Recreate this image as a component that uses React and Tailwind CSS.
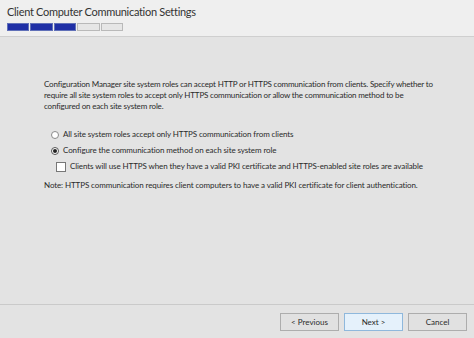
export default function App() {
  const font = { fontFamily: 'Lato, "Open Sans", sans-serif' }
  return (
    <div className="w-[474px] h-[338px] bg-[#e3e3e3] flex flex-col text-[#2a2a2a]" style={font}>
      {/* Header */}
      <div className="h-[37px] bg-[#efefef] border-b border-[#cfcfcf] px-[7px] pt-[4px]">
        <div className="text-[11px] leading-[15px] tracking-[-0.3px] text-[#333] whitespace-nowrap">
          Client Computer Communication Settings
        </div>
        <div className="mt-[4px] flex gap-[1px] h-[8px] w-[116px]">
          <div className="flex-1 bg-[#1f2fa6] border border-[#6070b8]" />
          <div className="flex-1 bg-[#1f2fa6] border border-[#6070b8]" />
          <div className="flex-1 bg-[#1f2fa6] border border-[#6070b8]" />
          <div className="flex-1 bg-[#e6e6e6] border border-[#b9b9b9]" />
          <div className="flex-1 bg-[#e6e6e6] border border-[#b9b9b9]" />
        </div>
      </div>

      {/* Body */}
      <div className="flex-1 pl-[44px] pt-[42px] text-[8px] leading-[11px] tracking-[-0.1px] whitespace-nowrap">
        <p className="tracking-[-0.17px]">
          Configuration Manager site system roles can accept HTTP or HTTPS communication from clients. Specify whether to
          <br />
          require all site system roles to accept only HTTPS communication or allow the communication method to be
          <br />
          configured on each site system role.
        </p>

        <div className="mt-[17px] flex flex-col gap-[5px]">
          <label className="flex items-center h-[11px] pl-[7px] gap-[4px]">
            <span className="w-[8px] h-[8px] rounded-full border border-[#8a8a8a] bg-white" />
            <span>All site system roles accept only HTTPS communication from clients</span>
          </label>
          <label className="flex items-center h-[11px] pl-[7px] gap-[4px]">
            <span className="w-[8px] h-[8px] rounded-full border border-[#555] bg-white flex items-center justify-center">
              <span className="w-[4px] h-[4px] rounded-full bg-[#222]" />
            </span>
            <span>Configure the communication method on each site system role</span>
          </label>
          <label className="flex items-center h-[11px] pl-[12px] gap-[4px]">
            <span className="w-[10px] h-[10px] border border-[#777] bg-white" />
            <span>Clients will use HTTPS when they have a valid PKI certificate and HTTPS-enabled site roles are available</span>
          </label>
        </div>

        <p className="mt-[8px]">
          Note: HTTPS communication requires client computers to have a valid PKI certificate for client authentication.
        </p>
      </div>

      {/* Footer */}
      <div className="h-[34px] border-t border-[#cacaca] flex items-center justify-end gap-[5px] pr-[7px] text-[8px]">
        <button className="w-[59px] h-[18px] bg-[#e1e1e1] border border-[#adadad]">&lt; Previous</button>
        <button className="w-[59px] h-[18px] bg-[#e5f1fb] border border-[#8fb8dc]">Next &gt;</button>
        <button className="w-[59px] h-[18px] bg-[#e1e1e1] border border-[#adadad]">Cancel</button>
      </div>
    </div>
  )
}
